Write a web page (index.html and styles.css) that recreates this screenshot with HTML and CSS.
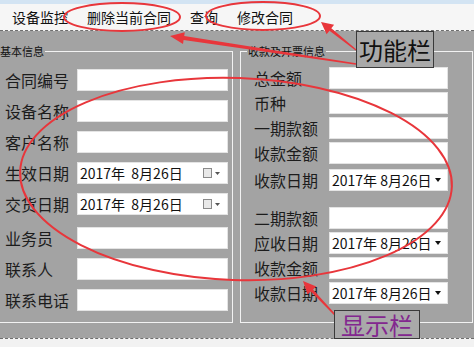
FILE: index.html
```html
<!DOCTYPE html>
<html lang="zh-CN">
<head>
    <meta charset="UTF-8">
    <title>合同管理</title>
    <link rel="stylesheet" href="styles.css">
</head>
<body>
    <div class="screen">
        <div class="titlestrip"></div>

        <div class="menubar">
            <span class="menu-item">设备监控</span>
            <span class="menu-item">删除当前合同</span>
            <span class="menu-item">查询</span>
            <span class="menu-item">修改合同</span>
        </div>

        <div class="main">
            <fieldset class="group group-basic">
                <legend>基本信息</legend>
                <div class="rows">
                    <div class="row"><span class="label">合同编号</span><div class="field"></div></div>
                    <div class="row"><span class="label">设备名称</span><div class="field"></div></div>
                    <div class="row"><span class="label">客户名称</span><div class="field"></div></div>
                    <div class="row">
                        <span class="label">生效日期</span>
                        <div class="field date">
                            <span>2017年&nbsp;&nbsp;8月26日</span>
                            <svg class="cal" width="18" height="10" viewBox="0 0 18 10">
                                <rect x="0.5" y="0.5" width="8" height="9" fill="#e9e9e9" stroke="#8a8a8a"/>
                                <path d="M12 4h5l-2.5 3z" fill="#555"/>
                            </svg>
                        </div>
                    </div>
                    <div class="row">
                        <span class="label">交货日期</span>
                        <div class="field date">
                            <span>2017年&nbsp;&nbsp;8月26日</span>
                            <svg class="cal" width="18" height="10" viewBox="0 0 18 10">
                                <rect x="0.5" y="0.5" width="8" height="9" fill="#e9e9e9" stroke="#8a8a8a"/>
                                <path d="M12 4h5l-2.5 3z" fill="#555"/>
                            </svg>
                        </div>
                    </div>
                    <div class="row spaced"><span class="label">业务员</span><div class="field"></div></div>
                    <div class="row"><span class="label">联系人</span><div class="field"></div></div>
                    <div class="row"><span class="label">联系电话</span><div class="field"></div></div>
                </div>
            </fieldset>

            <fieldset class="group group-pay">
                <legend>收款及开票信息</legend>
                <div class="rows">
                    <div class="row"><span class="label">总金额</span><div class="field"></div></div>
                    <div class="row"><span class="label">币种</span><div class="field"></div></div>
                    <div class="row"><span class="label">一期款额</span><div class="field"></div></div>
                    <div class="row"><span class="label">收款金额</span><div class="field"></div></div>
                    <div class="row row-date">
                        <span class="label">收款日期</span>
                        <div class="field date"><span>2017年&nbsp;8月26日</span><span class="drop"></span></div>
                    </div>
                    <div class="row row-second"><span class="label">二期款额</span><div class="field"></div></div>
                    <div class="row">
                        <span class="label">应收日期</span>
                        <div class="field date"><span>2017年&nbsp;8月26日</span><span class="drop"></span></div>
                    </div>
                    <div class="row"><span class="label">收款金额</span><div class="field"></div></div>
                    <div class="row">
                        <span class="label">收款日期</span>
                        <div class="field date"><span>2017年&nbsp;8月26日</span><span class="drop"></span></div>
                    </div>
                </div>
            </fieldset>
        </div>

        <div class="statusbar"></div>

        <!-- annotations drawn over the screenshot -->
        <svg class="marks" width="474" height="347" viewBox="0 0 474 347">
            <g fill="none" stroke="#e8363b" stroke-width="2">
                <ellipse cx="122" cy="17" rx="58" ry="14"/>
                <ellipse cx="263" cy="16" rx="57" ry="14"/>
                <ellipse cx="236" cy="179" rx="216" ry="101" transform="rotate(2 236 179)"/>
            </g>
            <g fill="#e8363b">
                <polygon points="170,36 184.8,32.2 184.2,36.1 356.1,63.2 355.9,64.8 183.6,40.1 183,44"/>
                <polygon points="321,22 334.1,24.8 331.3,28.3 356.4,49.5 355.6,50.5 329.5,30.7 326.6,34.2"/>
                <polygon points="303,281 316.3,286.4 313,289.5 336.6,315.5 335.4,316.5 310.8,291.5 307.5,294.6"/>
            </g>
        </svg>
        <div class="callout callout-func">功能栏</div>
        <div class="callout callout-show">显示栏</div>
    </div>
</body>
</html>
```

FILE: styles.css
```css
* {
    margin: 0;
    padding: 0;
    box-sizing: border-box;
}

body {
    font-family: "Noto Sans CJK SC", "Liberation Sans", sans-serif;
    background: #f0f0f0;
    color: #1a1a1a;
}

.screen {
    position: relative;
    width: 474px;
    height: 347px;
    overflow: hidden;
    display: flex;
    flex-direction: column;
}

.titlestrip {
    height: 4px;
    background: #d3e4f3;
}

.menubar {
    height: 27px;
    display: flex;
    align-items: center;
    gap: 19px;
    padding-left: 12px;
    background: #f6f6f6;
    border-bottom: 1px dashed #6e6e6e;
    font-size: 14px;
    color: #111;
}

.main {
    height: 307px;
    display: flex;
    gap: 7px;
    padding: 14px 0 15px;
    background: #a3a3a3;
}

.group {
    border: 1px solid #f2f2f2;
    min-width: 0;
}

.group legend {
    font-size: 11px;
    line-height: 13px;
    color: #111;
    padding: 0 1px;
}

.group-basic {
    width: 236px;
    margin-left: -3px;
    padding: 11px 3px 0 7px;
}

.group-basic legend {
    margin-left: -6px;
}

.group-pay {
    width: 233px;
    padding: 9px 0 0 13px;
}

.group-pay legend {
    margin-left: -7px;
}

.rows {
    display: flex;
    flex-direction: column;
}

.group-basic .rows { gap: 9px; }
.group-pay .rows { gap: 3px; }

.row {
    display: grid;
    height: 22px;
    align-items: center;
}

.group-basic .row { grid-template-columns: 72px 151px; }
.group-pay .row { grid-template-columns: 75px 119px; }

.row.spaced { margin-top: 3px; }
.row.row-date { margin-top: 2px; }
.row.row-second { margin-top: 13px; }

.label {
    font-size: 16px;
    line-height: 22px;
    white-space: nowrap;
    color: #1c1c1c;
}

.field {
    height: 22px;
    background: #fff;
    border: 1px solid #e4e4e4;
}

.date {
    display: flex;
    align-items: center;
    justify-content: space-between;
    padding: 0 6px 0 2px;
    font-size: 14px;
    color: #111;
}

.cal {
    display: block;
}

.drop {
    width: 0;
    height: 0;
    border-left: 3px solid transparent;
    border-right: 3px solid transparent;
    border-top: 4px solid #111;
}

.statusbar {
    flex: 1;
    border-top: 1px dashed #6e6e6e;
    background: #f2f2f2;
}

.marks {
    position: absolute;
    left: 0;
    top: 0;
    pointer-events: none;
}

.callout {
    position: absolute;
    border: 1px solid #3a3a3a;
    font-size: 24px;
    text-align: center;
}

.callout-func {
    left: 356px;
    top: 31px;
    width: 78px;
    height: 37px;
    line-height: 35px;
    background: #a9a9a9;
    color: #111;
}

.callout-show {
    left: 334px;
    top: 310px;
    width: 86px;
    height: 29px;
    line-height: 27px;
    background: #a9a9a9;
    color: #83278f;
}
```
